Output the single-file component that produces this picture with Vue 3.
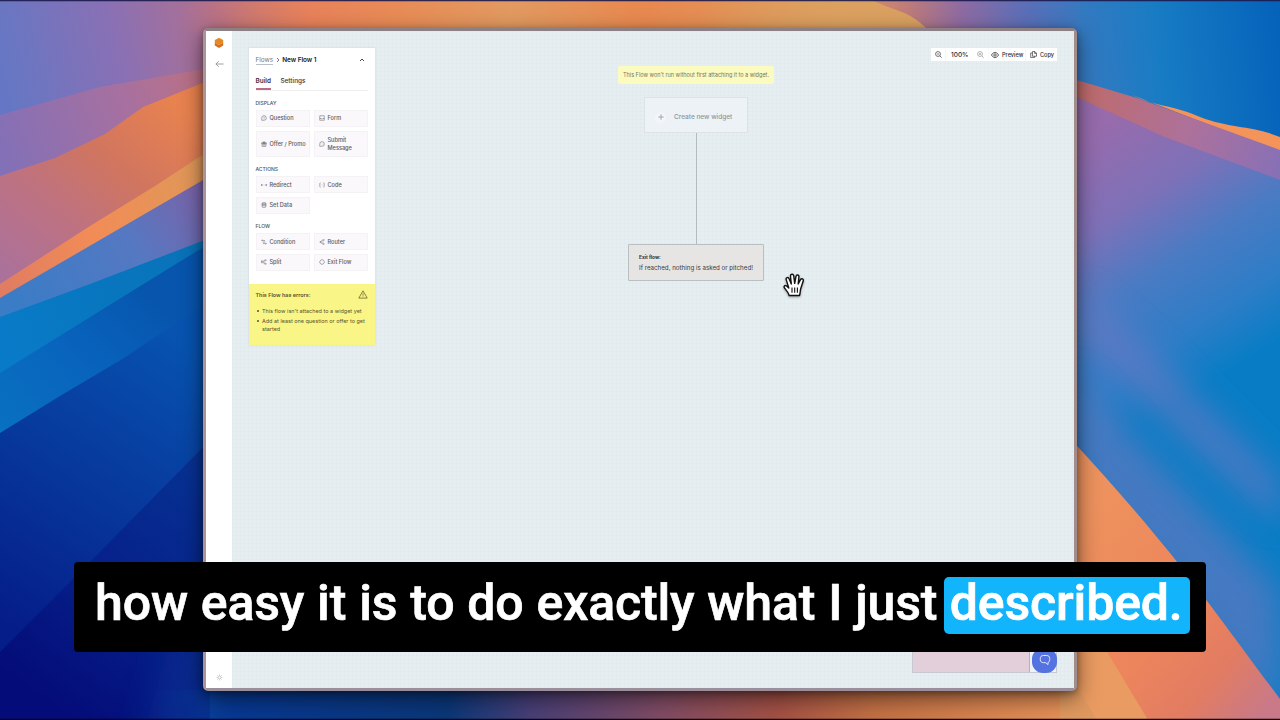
<!-- FlowBuilder.vue -->
<template>
  <div class="desktop">
    <svg class="wallpaper" viewBox="0 0 1280 720" preserveAspectRatio="none">
      <defs>
        <linearGradient v-for="g in gradients" :id="g.id" :key="g.id" gradientUnits="userSpaceOnUse" :x1="g.line[0]" :y1="g.line[1]" :x2="g.line[2]" :y2="g.line[3]">
          <stop v-for="(s, i) in g.stops" :key="i" :offset="s[0]" :stop-color="s[1]" />
        </linearGradient>
        <filter id="soft" x="-30%" y="-30%" width="160%" height="160%"><feGaussianBlur stdDeviation="16" /></filter>
      </defs>
      <rect width="1280" height="720" fill="#1268bb" />
      <path v-for="(s, i) in shapes" :key="i" :d="s.d" :fill="s.fill" :opacity="s.opacity || 1" :filter="s.soft ? 'url(#soft)' : null" />
    </svg>

    <div class="window">
      <aside class="rail">
        <svg class="logo" viewBox="0 0 10 12">
          <path d="M5 .8 9.200 3v2.600L5 8 .8 5.600V3z" fill="#e58a20" />
          <path d="M.8 5.600 5 8l4.200-2.400v2.800L5 11 .8 8.400z" fill="#d96c1c" />
        </svg>
        <svg class="back" viewBox="0 0 10 8"><path d="M9.500 4H1M4.200.8 1 4l3.200 3.200" /></svg>
        <svg class="gear" viewBox="0 0 10 10">
          <circle cx="5" cy="5" r="2" />
          <path d="M5 .8v1.600M5 7.600v1.600M.8 5h1.600M7.600 5h1.600M2 2l1.100 1.100M6.900 6.900 8 8M2 8l1.100-1.100M6.900 3.100 8 2" />
        </svg>
      </aside>

      <main class="canvas">
        <section class="panel">
          <div class="panel-body">
            <div class="crumbs">
              <a class="crumb-link">Flows</a>
              <svg class="crumb-sep" viewBox="0 0 4 6"><path d="m1 1 2 2-2 2" /></svg>
              <span class="crumb-name">New Flow 1</span>
              <svg class="collapse" viewBox="0 0 6 4"><path d="m1 3 2-2 2 2" /></svg>
            </div>
            <nav class="tabs">
              <span class="tab active">Build</span>
              <span class="tab">Settings</span>
            </nav>
            <div v-for="group in groups" :key="group.title" class="group">
              <h3 class="group-title">{{ group.title }}</h3>
              <div class="blocks">
                <div v-for="item in group.items" :key="item.label" :class="['block', { tall: item.tall }]">
                  <svg class="block-icon" viewBox="0 0 12 12"><path :d="item.icon" /></svg>
                  <span class="block-label">{{ item.label }}</span>
                </div>
              </div>
            </div>
          </div>
          <div class="errors">
            <div class="errors-head">
              <span>This Flow has errors:</span>
              <svg class="warn" viewBox="0 0 10 9"><path d="M5 .8 9.200 8.100H.8zM5 3.400v2.300M5 6.500v.5" /></svg>
            </div>
            <ul class="error-list">
              <li v-for="error in errors" :key="error">{{ error }}</li>
            </ul>
          </div>
        </section>

        <div class="notice">This Flow won't run without first attaching it to a widget.</div>
        <div class="widget-node">
          <span class="plus"><svg viewBox="0 0 6 6"><path d="M3 .3v5.400M.3 3h5.400" /></svg></span>
          <span class="widget-label">Create new widget</span>
        </div>
        <div class="edge"></div>
        <div class="exit-node">
          <strong>Exit flow:</strong>
          <span>If reached, nothing is asked or pitched!</span>
        </div>

        <div class="toolbar">
          <span class="tool zoom-out">
            <svg viewBox="0 0 10 10"><circle cx="4.300" cy="4.300" r="3.500" /><path d="m6.800 6.800 2.700 2.700M2.800 4.300h3" /></svg>
          </span>
          <span class="tool zoom-level">100%</span>
          <span class="tool zoom-in">
            <svg viewBox="0 0 10 10"><circle cx="4.300" cy="4.300" r="3.500" /><path d="m6.800 6.800 2.700 2.700M2.800 4.300h3M4.300 2.800v3" /></svg>
          </span>
          <span class="tool preview">
            <svg viewBox="0 0 10 10"><path d="M.6 5C2.600.8 7.400.8 9.400 5 7.400 9.200 2.600 9.200.6 5z" /><circle cx="5" cy="5" r="1.500" /></svg>
            <span>Preview</span>
          </span>
          <span class="tool copy">
            <svg viewBox="0 0 10 10"><path d="M3.500.8h3.400L9.300 3.200v4.300H3.500zM6.600.8v2.700h2.700M3.500 2.900H1v6.500h5.500V7.500" /></svg>
            <span>Copy</span>
          </span>
        </div>

        <div class="minimap"><div class="minimap-view"></div></div>
        <div class="chat">
          <svg viewBox="0 0 12 12"><path d="M4.500 1.500h3c2 0 3.200 1.200 3.200 2.900v1.200c0 1.500-.7 2.500-1.700 2.900v2.200L6.800 8.700H4.500C2.500 8.700 1.300 7.400 1.300 5.700V4.400C1.300 2.700 2.500 1.500 4.500 1.500z" /></svg>
        </div>
      </main>
    </div>

    <svg class="cursor" viewBox="0 0 24 26">
      <path d="M7.200 23.500C6.500 20.600 4.800 18.700 2.700 16.200 1.200 14.400 2.800 12.700 4.600 14L6.800 16 4.200 7.600C3.600 5.500 6.200 4.600 7.100 6.700L9.300 12 8.500 4.200C8.300 1.900 11.200 1.500 11.700 3.700L12.700 11.400 14 4.300C14.500 2.200 17.200 2.700 16.900 4.900L16.200 12 18.500 7.700C19.500 5.900 21.900 7 21.200 9L18.700 16.700C18.100 18.700 18.500 20.500 17.500 23.500z" />
      <path class="lines" d="M10 15.500v5.200M12.700 15.500v5.200M15.400 15.500v5.200" />
    </svg>

    <div class="caption">
      <span class="caption-line">
        <span v-for="(word, i) in caption" :key="i" :class="['word', { spoken: i === caption.length - 1 }]">{{ word }}</span>
      </span>
    </div>
  </div>
</template>

<script setup>
const gradients = [
  { id: 'sky', line: [0, 60, 330, -20], stops: [[0, '#6577c4'], [0.35, '#8a70b4'], [0.65, '#b1708e'], [1, '#eb8656']] },
  { id: 'violet', line: [0, 160, 210, 70], stops: [[0, '#8270b8'], [0.6, '#a770a0'], [1, '#bd7180']] },
  { id: 'rose', line: [0, 280, 160, 90], stops: [[0, '#a9719d'], [0.35, '#bd7282'], [0.65, '#d0755f'], [1, '#e8824f']] },
  { id: 'flame', line: [0, 290, 203, 165], stops: [[0, '#df7c62'], [0.45, '#f28c57'], [1, '#df9858']] },
  { id: 'steel', line: [30, 320, 203, 200], stops: [[0, '#3b7cc6'], [0.6, '#5578c2'], [1, '#7864a9']] },
  { id: 'azure', line: [0, 350, 203, 250], stops: [[0, '#087bc8'], [1, '#0872b7']] },
  { id: 'cobalt', line: [0, 430, 150, 290], stops: [[0, '#0871c0'], [0.5, '#0864bd'], [1, '#0755ad']] },
  { id: 'navy', line: [180, 340, 0, 620], stops: [[0, '#0753af'], [0.5, '#07389c'], [1, '#051d88']] },
  { id: 'deep', line: [200, 460, 30, 690], stops: [[0, '#073293'], [0.5, '#06218a'], [1, '#040c79']] },
  { id: 'floor', line: [150, 0, 1180, 0], stops: [[0, '#06309000'], [0.08, '#073893'], [0.29, '#0b3779'], [0.37, '#493f77'], [0.5, '#824c64'], [0.61, '#a45144'], [0.7, '#c27044'], [0.9, '#e89359'], [1, '#f29c62']] },
  { id: 'top', line: [180, 0, 1280, 0], stops: [[0, '#c8737200'], [0.12, '#e8825a'], [0.2, '#e88c56'], [0.3, '#e29a60'], [0.42, '#e8894f'], [0.6, '#de9a5c'], [0.66, '#c07c78'], [0.71, '#8f6ba2'], [0.77, '#5a6fb9'], [0.82, '#3779c0'], [0.89, '#187bc4'], [1, '#0563ba']] },
  { id: 'sand', line: [700, 0, 928, 0], stops: [[0, '#dca15f00'], [0.6, '#dca15f'], [1, '#d9a062']] },
  { id: 'east', line: [1077, 60, 1280, 40], stops: [[0, '#3779c0'], [0.4, '#187cc4'], [1, '#0563ba']] },
  { id: 'ribbon', line: [1077, 90, 1280, 165], stops: [[0, '#bf6b69'], [0.55, '#ad719b'], [1, '#8870b6']] },
  { id: 'lilac', line: [1080, 140, 1230, 370], stops: [[0, '#976bac'], [0.3, '#7e71b8'], [0.55, '#4a7bc3'], [0.8, '#2d7dc7'], [1, '#087dc5']] },
  { id: 'coral', line: [1077, 520, 1280, 690], stops: [[0, '#ed925e'], [0.5, '#ed855c'], [0.78, '#e27c62'], [1, '#c97987']] }
]

const shapes = [
  { d: 'M0 0H640V200H0z', fill: 'url(#sky)' },
  { d: 'M1070 0H1280V300H1070z', fill: 'url(#east)' },
  { d: 'M180 0H1080V32H180z', fill: 'url(#top)' },
  { d: 'M700 0H872C895 12 908 9 928 30H700z', fill: 'url(#sand)' },
  { d: 'M0 115 100 87 210 68V300H0z', fill: 'url(#violet)' },
  { d: 'M0 176 55 158 105 134 143 107 210 80V320H0z', fill: 'url(#rose)' },
  { d: 'M0 284 90 226 155 186 210 150V320H0z', fill: 'url(#flame)' },
  { d: 'M0 298 210 176V340H0z', fill: 'url(#steel)' },
  { d: 'M0 317 90 284 210 238V400H0z', fill: 'url(#azure)' },
  { d: 'M0 373 95 314 210 243V460H0z', fill: 'url(#cobalt)' },
  { d: 'M0 433 60 396 124 358 210 300V720H0z', fill: 'url(#navy)' },
  { d: 'M0 652 92 560 210 440V720H0z', fill: 'url(#deep)' },
  { d: 'M170 640H330V780H130z', fill: '#073b98', opacity: 0.45, soft: true },
  { d: 'M150 690H1200V720H150z', fill: 'url(#floor)' },
  { d: 'M1132 95C1160 108 1170 104 1200 117 1232 129 1250 125 1280 137V152z', fill: '#f4935a' },
  { d: 'M1070 78 1137 98 1280 150V195L1070 105z', fill: 'url(#ribbon)' },
  { d: 'M1070 94 1165 137 1280 180V720H1070z', fill: 'url(#lilac)' },
  { d: 'M1080 290 1150 350 1230 430 1280 480V525L1210 465 1130 390 1075 330z', fill: '#6f78c2', opacity: 0.6, soft: true },
  { d: 'M1070 370 1110 410 1280 590V720L1070 470z', fill: '#5f78c0', opacity: 0.7, soft: true },
  { d: 'M1070 438C1110 482 1135 510 1170 553 1208 601 1230 632 1280 699V720H1070z', fill: 'url(#coral)' },
  { d: 'M1070 600 1100 640 1148 720H1060z', fill: '#ea9b61' },
  { d: 'M1060 660 1097 720H1060z', fill: '#df985f' },
  { d: 'M0 0H1280V1.200H0z', fill: '#1b1a4e', opacity: 0.9 },
  { d: 'M0 718.700H1280V720H0z', fill: '#080712' }
]

const icons = {
  question: 'M1.500 10.500V6a4.600 4.600 0 1 1 4.600 4.500zM6.200 3.500v3M6.200 7.700v.8',
  form: 'M1.500 1.500h9v9h-9zM1.500 7h3l.8 1h1.800L8 7h2.500',
  gift: 'M1.200 3.500h9.600v2H1.200zM2.200 5.500h7.600v5.200H2.200zM6 3.500v7M6 3.500C4 3.500 3.200 1.500 4.500 1.300 5.400 1.200 6 3.500 6 3.500s.6-2.300 1.500-2.200C8.800 1.500 8 3.500 6 3.500z',
  message: 'M1.500 10.500V6a4.600 4.600 0 1 1 4.600 4.500zM4 6h.5M6 6h.5M8 6h.5',
  redirect: 'M0 6h4.500M7.500 6H12M2 4.200.2 6 2 7.800M10 4.200 11.800 6 10 7.800',
  code: 'M3 1.500C.5 1.500 2.500 5.500.8 6 2.500 6.500.5 10.500 3 10.500M9 1.500c2.500 0 .5 4 2.200 4.500-1.700.5.300 4.500-2.200 4.500M4.500 6h.6M7 6h.6',
  data: 'M2 2.500C2 .8 10 .8 10 2.500v7c0 1.700-8 1.700-8 0zM2 2.800c1 1.200 7 1.200 8 0M2 5h8M2 7.500h8',
  condition: 'M1 3h7M1 3l2-1.800M11 9H4M11 9 9 10.800M3 6h6',
  router: 'M10.500 2H8C4 2 5 6 1.500 6 5 6 4 10 8 10h2.500M2 6h7M9 .8 10.500 2 9 3.200M9 8.800l1.500 1.200L9 11.200',
  split: 'M.5 3.500h2v4h-2zM3 6h3V2.500h4M6 6v3.500h4M9 1l1.800 1.500L9 4M9 8l1.800 1.500L9 11',
  exit: 'M3.500 2.300 6 1.200l2.700 1.100L10.500 5v2.300L8.400 10 6 10.700 3.500 10 1.600 7.300V5z'
}

const groups = [
  {
    title: 'DISPLAY',
    items: [
      { label: 'Question', icon: icons.question },
      { label: 'Form', icon: icons.form },
      { label: 'Offer / Promo', icon: icons.gift, tall: true },
      { label: 'Submit Message', icon: icons.message, tall: true }
    ]
  },
  {
    title: 'ACTIONS',
    items: [
      { label: 'Redirect', icon: icons.redirect },
      { label: 'Code', icon: icons.code },
      { label: 'Set Data', icon: icons.data }
    ]
  },
  {
    title: 'FLOW',
    items: [
      { label: 'Condition', icon: icons.condition },
      { label: 'Router', icon: icons.router },
      { label: 'Split', icon: icons.split },
      { label: 'Exit Flow', icon: icons.exit }
    ]
  }
]

const errors = [
  "This flow isn't attached to a widget yet",
  'Add at least one question or offer to get started'
]

const caption = 'how easy it is to do exactly what I just described.'.split(' ')
</script>

<style>
html,
body {
  margin: 0;
  overflow: hidden;
}
</style>

<style scoped>
.desktop {
  position: relative;
  width: 1280px;
  height: 720px;
  overflow: hidden;
  font-family: Inter, "Open Sans", sans-serif;
  color: #3c3d42;
}

.desktop * {
  box-sizing: border-box;
}

svg {
  display: block;
  fill: none;
  flex: none;
}

.wallpaper {
  position: absolute;
  inset: 0;
  width: 1280px;
  height: 720px;
}

.window {
  position: absolute;
  left: 203px;
  top: 28px;
  width: 874px;
  height: 663px;
  display: flex;
  border: 3px solid #9a8f98;
  border-color: #8c8084 #a18d8b #9b8f9b #ab9396;
  border-radius: 5px;
  background: #fff;
  box-shadow: 0 7px 22px rgba(0, 0, 0, 0.52), 0 2px 6px rgba(0, 0, 0, 0.3);
}

.rail {
  width: 26px;
  display: flex;
  flex-direction: column;
  align-items: center;
  padding: 6px 0 7px;
  background: #fff;
}

.logo {
  width: 10px;
  height: 12px;
}

.back {
  width: 9px;
  height: 8px;
  margin-top: 11px;
  stroke: #898b91;
  stroke-width: 0.9;
}

.gear {
  width: 7px;
  height: 7px;
  margin-top: auto;
  stroke: #a5a6ab;
  stroke-width: 0.8;
}

.canvas {
  position: relative;
  flex: 1;
  background-color: #e7eef1;
  background-image:
    linear-gradient(rgba(205, 221, 228, 0.16) 1px, transparent 1px),
    linear-gradient(90deg, rgba(205, 221, 228, 0.16) 1px, transparent 1px);
  background-size: 4px 4px;
}

.panel {
  position: absolute;
  left: 17px;
  top: 17px;
  width: 126px;
  height: 297px;
  display: flex;
  flex-direction: column;
  background: #fff;
  box-shadow: 0 0 2px rgba(140, 160, 170, 0.25);
}

.panel-body {
  height: 236px;
  padding: 0 7px 0 6.500px;
}

.crumbs {
  display: flex;
  align-items: center;
  height: 24px;
  font-size: 6px;
  white-space: nowrap;
}

.crumb-link {
  color: #6c7d86;
  font-size: 6.400px;
  line-height: 8px;
  border-bottom: 1px solid #b8c0c5;
}

.crumb-sep {
  width: 4px;
  height: 6px;
  margin: 0 2.500px;
  stroke: #55565c;
  stroke-width: 0.8;
}

.crumb-name {
  color: #17181c;
  font-weight: 600;
  font-size: 6.400px;
}

.collapse {
  width: 6px;
  height: 4px;
  margin-left: auto;
  margin-right: 3px;
  stroke: #333;
  stroke-width: 0.9;
}

.tabs {
  display: flex;
  gap: 9.500px;
  height: 19px;
  border-bottom: 1px solid #efeff1;
  font-size: 6.400px;
  font-weight: 500;
  line-height: 19px;
  color: #333439;
}

.tab.active {
  height: 18px;
  font-weight: 600;
  color: #4b2b39;
  border-bottom: 2px solid #bd6a85;
}

.group {
  padding-top: 9px;
}

.group + .group {
  padding-top: 9.700px;
}

.group-title {
  margin: 0;
  height: 10px;
  font-size: 5px;
  font-weight: 500;
  line-height: 7px;
  color: #3f5661;
}

.blocks {
  display: grid;
  grid-template-columns: 54px 54px;
  gap: 4px;
}

.block {
  display: flex;
  align-items: center;
  height: 16.700px;
  padding-left: 4px;
  border: 1px solid #f4f2f4;
  background: #faf8fa;
}

.block.tall {
  height: 26px;
}

.block-icon {
  width: 6px;
  height: 6px;
  margin-right: 3px;
  stroke: #65656c;
  stroke-width: 1.100;
}

.block-label {
  font-size: 5.600px;
  font-weight: 500;
  line-height: 8px;
  color: #595a61;
}

.errors {
  height: 61px;
  padding: 6px 7px 6px 6.500px;
  background: #faf587;
}

.errors-head {
  display: flex;
  justify-content: space-between;
  height: 10px;
  font-size: 5.450px;
  font-weight: 600;
  line-height: 11px;
  color: #55532a;
}

.warn {
  width: 10px;
  height: 9px;
  stroke: #69672c;
  stroke-width: 0.8;
}

.error-list {
  margin: 7px -6px 0 0;
  padding-left: 6.500px;
  list-style: none;
  font-size: 5.480px;
  line-height: 8px;
  color: #55542a;
}

.error-list li {
  position: relative;
}

.error-list li::before {
  content: "";
  position: absolute;
  left: -5px;
  top: 3px;
  width: 2px;
  height: 2px;
  border-radius: 50%;
  background: #55542a;
}

.error-list li + li {
  margin-top: 2px;
}

.notice {
  position: absolute;
  left: 386px;
  top: 35px;
  width: 156px;
  height: 18px;
  border-radius: 2px;
  background: #fbfbc0;
  font-size: 5.520px;
  line-height: 19px;
  text-align: center;
  white-space: nowrap;
  color: #74756a;
}

.widget-node {
  position: absolute;
  left: 412px;
  top: 66px;
  width: 104px;
  height: 36px;
  display: flex;
  align-items: center;
  padding: 4px 0 0 10px;
  border: 1px solid #dce3e8;
  background: #edf2f6;
}

.plus {
  display: flex;
  align-items: center;
  justify-content: center;
  width: 11px;
  height: 11px;
  margin-right: 8px;
  border-radius: 50%;
  background: #f3f6f9;
}

.plus svg {
  width: 6px;
  height: 6px;
  stroke: #8e979f;
  stroke-width: 0.8;
}

.widget-label {
  font-size: 6.500px;
  font-weight: 500;
  white-space: nowrap;
  color: #8b949b;
}

.edge {
  position: absolute;
  left: 464px;
  top: 102px;
  width: 1px;
  height: 112px;
  background: #b4babe;
}

.exit-node {
  position: absolute;
  left: 396px;
  top: 213px;
  width: 136px;
  height: 37px;
  display: flex;
  flex-direction: column;
  padding: 8px 0 0 10px;
  border: 1px solid #b9bec1;
  border-radius: 1px;
  background: #e7e5e4;
  white-space: nowrap;
}

.exit-node strong {
  font-size: 4.800px;
  line-height: 8px;
  color: #303136;
}

.exit-node span {
  margin-top: 1px;
  font-size: 6.200px;
  line-height: 11px;
  color: #37383d;
}

.toolbar {
  position: absolute;
  right: 17px;
  top: 17px;
  display: flex;
  height: 13px;
  background: #fff;
  font-size: 5.600px;
  font-weight: 500;
  color: #2b2c30;
}

.tool {
  display: flex;
  align-items: center;
  gap: 3px;
  padding-left: 4px;
  border-right: 1px solid #f3f5f6;
}

.tool svg {
  width: 7px;
  height: 7px;
  stroke: #3b3c40;
  stroke-width: 1;
}

.zoom-out {
  width: 15px;
}

.zoom-level {
  width: 31px;
  padding-left: 5px;
  font-size: 6.500px;
  border-right: none;
}

.zoom-in {
  width: 12px;
  padding-left: 0;
  opacity: 0.55;
}

.preview {
  width: 37px;
  padding-left: 2px;
}

.preview svg {
  width: 8px;
  height: 8px;
}

.copy {
  width: 31px;
  border-right: none;
}

.minimap {
  position: absolute;
  right: 17px;
  bottom: 15px;
  width: 145px;
  height: 90px;
  border: 1px solid #c7c9d2;
  background: #eff2f6;
}

.minimap-view {
  width: 117px;
  height: 100%;
  border-right: 1px solid #c4a9b9;
  background: #e2cfd9;
}

.chat {
  position: absolute;
  right: 17px;
  bottom: 15.500px;
  width: 25px;
  height: 25px;
  display: flex;
  align-items: center;
  justify-content: center;
  border-radius: 11px;
  background: #5573e0;
}

.chat svg {
  width: 12px;
  height: 12px;
  stroke: #e6ebff;
  stroke-width: 1;
}

.cursor {
  position: absolute;
  left: 781.500px;
  top: 271.500px;
  width: 24px;
  height: 26px;
  fill: #fff;
  stroke: #111;
  stroke-width: 1.400;
  stroke-linejoin: round;
  filter: drop-shadow(0 1px 1px rgba(0, 0, 0, 0.35));
}

.cursor .lines {
  stroke-width: 1.100;
}

.caption {
  position: absolute;
  left: 74px;
  top: 562px;
  width: 1132px;
  height: 90px;
  display: flex;
  padding: 15px 0 0 21px;
  border-radius: 4px;
  background: #000;
}

.caption-line {
  display: flex;
  gap: 12.900px;
  height: 57px;
  font-family: Roboto, sans-serif;
  font-size: 50px;
  font-weight: 500;
  line-height: 52px;
  letter-spacing: -0.130px;
  white-space: nowrap;
  color: #fff;
  -webkit-text-stroke: 0.700px #fff;
}

.word.spoken {
  margin-left: -6.500px;
  padding: 0 7.500px 0 6px;
  border-radius: 5px;
  background: #12b4fb;
}
</style>
